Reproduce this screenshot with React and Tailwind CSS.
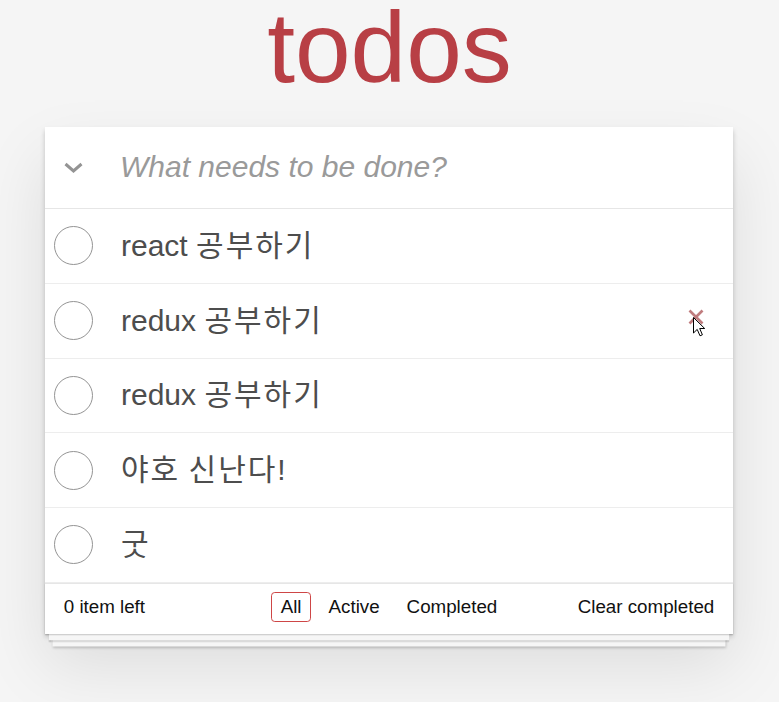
import React from 'react';

const todos = [
    { id: 1, text: 'react 공부하기' },
    { id: 2, text: 'redux 공부하기', hover: true },
    { id: 3, text: 'redux 공부하기' },
    { id: 4, text: '야호 신난다!' },
    { id: 5, text: '굿' },
];

const font = { fontFamily: '"Liberation Sans", Arial, "Noto Sans CJK KR", sans-serif' };

// hangul runs get a bit of tracking so they take the width of the reference font
const Label = ({ text }) => text.split(/([\uAC00-\uD7A3]+)/).map((part, i) =>
    /[\uAC00-\uD7A3]/.test(part)
        ? <span key={i} className="tracking-[2px]">{part}</span>
        : <React.Fragment key={i}>{part}</React.Fragment>
);

const Chevron = () => (
    <svg width="19" height="11" viewBox="0 0 19 11" fill="none">
        <polyline points="1.5,2 9.5,9 17.5,2" stroke="#949494" strokeWidth="3" />
    </svg>
);

const Cursor = () => (
    <svg width="13" height="20" viewBox="0 0 13 20" className="absolute left-[5px] top-[8px]">
        <path d="M0.5 0.5 L0.5 16 L4.2 12.4 L7 18.8 L9.4 17.8 L6.7 11.5 L11.7 11.5 Z" fill="#fff" stroke="#000" strokeWidth="1" strokeLinejoin="round" />
    </svg>
);

const TodoItem = ({ todo }) => (
    <li className="flex items-center h-[74.75px] border-b border-[#ededed]">
        <div className="ml-[9px] w-[39px] h-[39px] rounded-full border border-[#949494] shrink-0" />
        <span className="ml-[28px] text-[30px] leading-[36px] text-[#4d4d4d]"><Label text={todo.text} /></span>
        {todo.hover && (
            <div className="relative ml-auto mr-[29.5px] mb-[7px] w-[16px] h-[16px]">
                <svg width="16" height="16" viewBox="0 0 16 16">
                    <line x1="1.5" y1="1.5" x2="14.5" y2="14.5" stroke="#c07c7e" strokeWidth="2.6" />
                    <line x1="14.5" y1="1.5" x2="1.5" y2="14.5" stroke="#c07c7e" strokeWidth="2.6" />
                </svg>
                <Cursor />
            </div>
        )}
    </li>
);

const App = () => {
    return (
        <div className="min-h-screen h-[702px] overflow-hidden bg-[#f5f5f5]" style={font}>
            {/* Title */}
            <h1 className="text-center text-[100px] leading-[94px] text-[#b83f45] font-extralight">todos</h1>

            {/* App card */}
            <section className="ml-[45px] mt-[33px] w-[688px] bg-white shadow-[0_2.5px_5px_rgba(0,0,0,0.2),0_31.25px_62.5px_rgba(0,0,0,0.1)]">
                <div className="flex items-center h-[81px]">
                    <div className="ml-[19px] pb-[1px] w-[56px] flex">
                        <Chevron />
                    </div>
                    <input
                        className="flex-1 mr-[20px] pb-[2px] bg-transparent outline-none text-[30px] italic text-[#4d4d4d] placeholder:text-[#9a9a9a]"
                        placeholder="What needs to be done?"
                        style={font}
                    />
                </div>

                <ul className="border-t border-[#e6e6e6]">
                    {todos.map(t => <TodoItem key={t.id} todo={t} />)}
                </ul>

                {/* Footer */}
                <footer className="grid grid-cols-[1fr_auto_1fr] items-center h-[51px] px-[18.75px] pb-[4px] border-t border-[#e6e6e6] text-[18.75px] text-[#111] shadow-[0_1.25px_1.25px_rgba(0,0,0,0.2),0_10px_0_-3.75px_#f6f6f6,0_11.25px_1.25px_-3.75px_rgba(0,0,0,0.2),0_20px_0_-7.5px_#f6f6f6,0_21.25px_2.5px_-7.5px_rgba(0,0,0,0.2)]">
                    <span>0 item left</span>
                    <ul className="flex gap-[7.5px]">
                        {['All', 'Active', 'Completed'].map((f, i) => (
                            <li
                                key={f}
                                className={`px-[8.75px] py-[3.75px] leading-[21px] rounded-[3.75px] border ${i === 0 ? 'border-[#ce4646]' : 'border-transparent'}`}
                            >
                                {f}
                            </li>
                        ))}
                    </ul>
                    <span className="text-right">Clear completed</span>
                </footer>
            </section>
        </div>
    );
};

export default App;
